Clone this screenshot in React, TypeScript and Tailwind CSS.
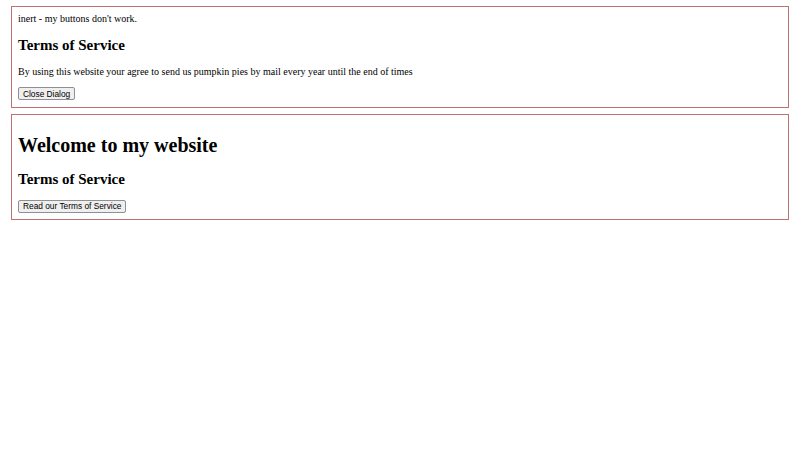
import React from "react";

const serif = { fontFamily: '"Liberation Serif", "Times New Roman", serif' };

function Btn({ children }: { children: React.ReactNode }) {
  return (
    <button
      className="inline-flex items-center h-[13px] px-[4px] bg-[#efefef] border border-[#8f8f8f] rounded-[2px] text-[8.33px] leading-none text-black font-['Liberation_Sans',Arial,sans-serif] align-baseline"
    >
      {children}
    </button>
  );
}

export default function App() {
  return (
    <div className="w-[800px] h-[450px] bg-white text-black" style={serif}>
      <div className="flex flex-col gap-[6px] px-[11px] pt-[6px]">
        <div className="border border-[#bc7272] pl-[6px] pr-[6px] pt-[6px] pb-[7px]">
          <div className="text-[10px] leading-[11.5px]">inert - my buttons don't work.</div>
          <h2 className="text-[15px] leading-[17.25px] font-bold mt-[12.5px]">Terms of Service</h2>
          <p className="text-[10px] leading-[11.5px] mt-[11.5px]">
            By using this website your agree to send us pumpkin pies by mail every year until the end of times
          </p>
          <div className="mt-[10px] flex">
            <Btn>Close Dialog</Btn>
          </div>
        </div>
        <div className="border border-[#bc7272] pl-[6px] pr-[6px] pt-[5px] pb-[6px]">
          <h1 className="text-[20px] leading-[23px] font-bold mt-[13.4px]">Welcome to my website</h1>
          <h2 className="text-[15px] leading-[17.25px] font-bold mt-[13.9px]">Terms of Service</h2>
          <div className="mt-[12px] flex">
            <Btn>Read our Terms of Service</Btn>
          </div>
        </div>
      </div>
    </div>
  );
}
